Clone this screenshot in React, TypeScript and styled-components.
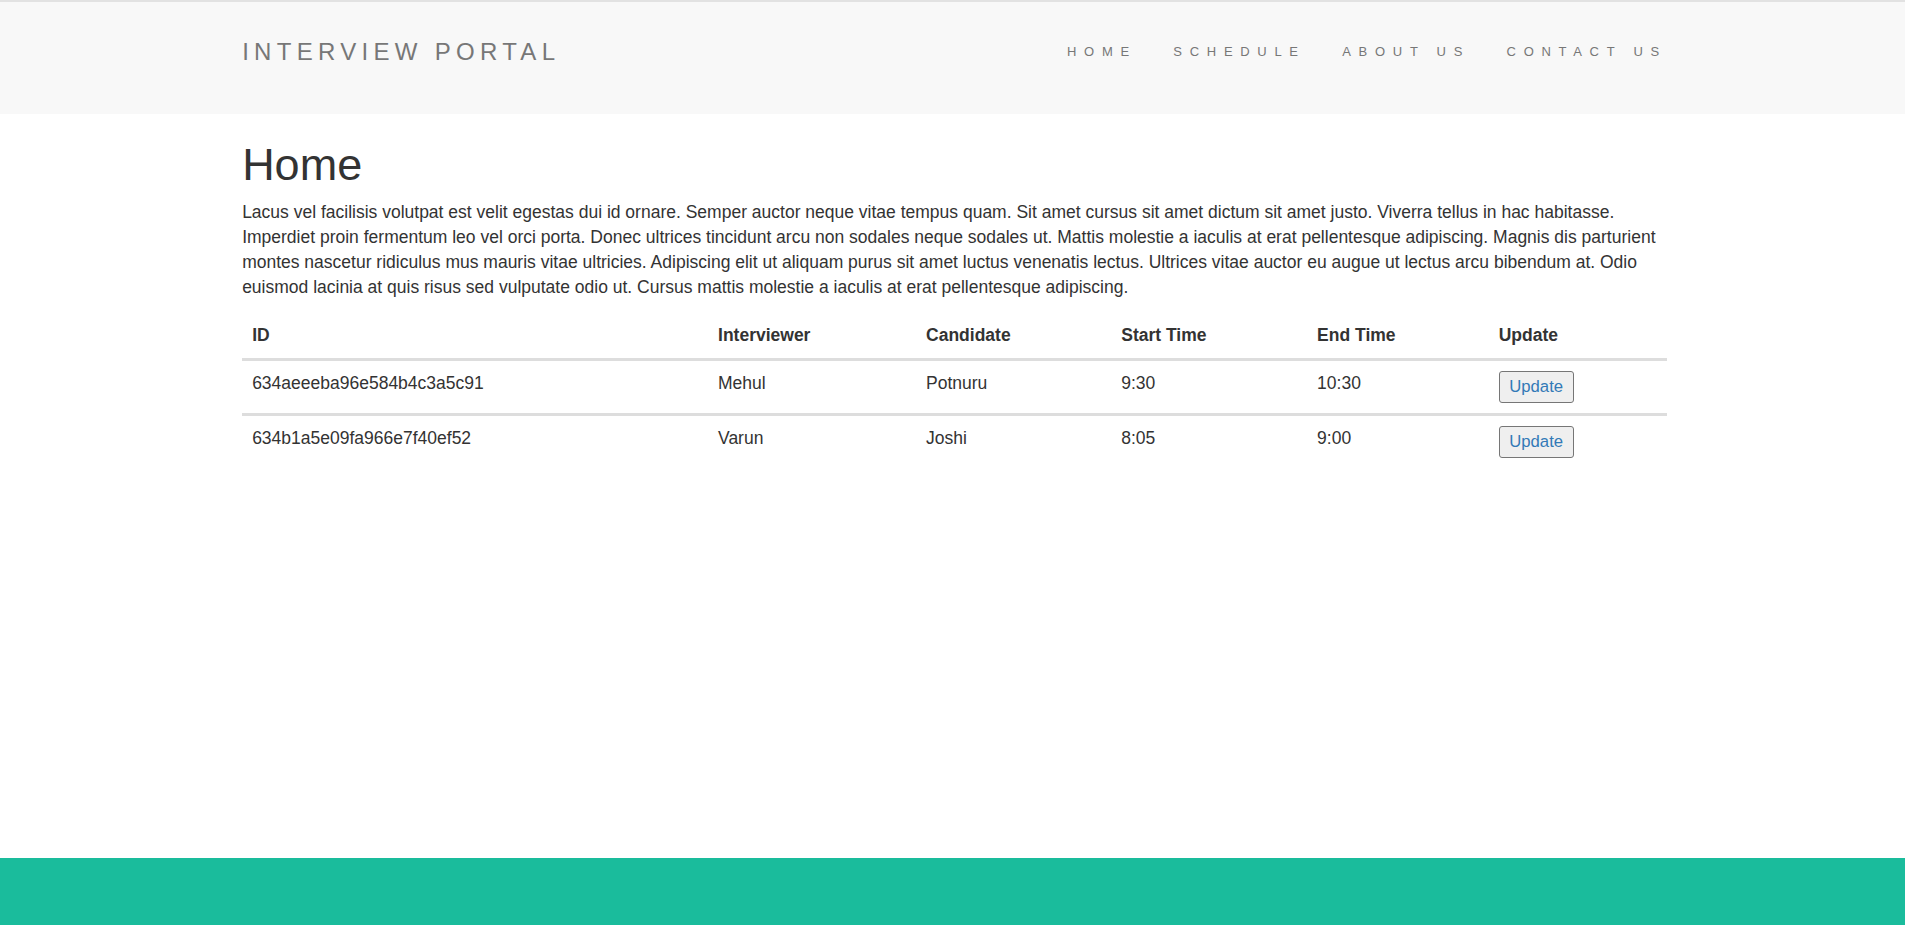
import React from 'react'
import styled, {createGlobalStyle} from 'styled-components'

const GlobalStyle = createGlobalStyle`
  html, body {
    margin: 0;
    padding: 0;
    background: #fff;
  }
  body {
    font-family: "Liberation Sans", Arial, Helvetica, sans-serif;
    font-size: 17.5px;
    line-height: 25px;
    color: #333;
  }
  * {
    box-sizing: border-box;
  }
`

const Page = styled.div`
  min-height: 100vh;
  display: flex;
  flex-direction: column;
`

const Container = styled.div`
  width: 75%;
  margin: 0 auto;
  padding-left: 4px;
`

const Navbar = styled.header`
  background: #f8f8f8;
  border-top: 2px solid #e2e2e2;
  height: 114px;
`

const NavInner = styled(Container)`
  display: flex;
  align-items: center;
  justify-content: space-between;
  padding-top: 35px;
`

const Brand = styled.a`
  font-size: 24px;
  line-height: 30px;
  letter-spacing: 5.3px;
  color: #777;
  text-decoration: none;
`

const NavList = styled.nav`
  display: flex;
  gap: 36.5px;
  margin-right: 0;
`

const NavLink = styled.a`
  font-size: 13px;
  line-height: 30px;
  letter-spacing: 7.7px;
  color: #777;
  text-decoration: none;
`

const Main = styled(Container)`
  flex: 1;
`

const Title = styled.h1`
  font-size: 45px;
  font-weight: 500;
  line-height: 1.1;
  margin: 26px 0 10px;
  color: #333;
`

const Lead = styled.p`
  margin: 0 0 13.5px;
`

const Table = styled.table`
  width: 100%;
  border-collapse: collapse;
  border-spacing: 0;
`

const Th = styled.th<{$w: string}>`
  width: ${p => p.$w};
  text-align: left;
  font-weight: bold;
  padding: 10px;
  vertical-align: bottom;
  border-bottom: 3px solid #ddd;
`

const Td = styled.td`
  padding: 10px;
  vertical-align: top;
  border-top: 3px solid #ddd;
`

const UpdateButton = styled.button`
  font-family: "Liberation Sans", Arial, sans-serif;
  font-size: 16.7px;
  line-height: 26px;
  height: 32px;
  padding: 0 9.5px;
  color: #337ab7;
  background: #efefef;
  border: 1px solid #767676;
  border-radius: 3px;
  cursor: pointer;
`

const Footer = styled.footer`
  height: 67px;
  background: #1abc9c;
`

const columns = [
  {label: 'ID', w: '32.7%'},
  {label: 'Interviewer', w: '14.6%'},
  {label: 'Candidate', w: '13.7%'},
  {label: 'Start Time', w: '13.75%'},
  {label: 'End Time', w: '12.75%'},
  {label: 'Update', w: '12.5%'}
]

const interviews = [
  {id: '634aeeeba96e584b4c3a5c91', interviewer: 'Mehul', candidate: 'Potnuru', start: '9:30', end: '10:30'},
  {id: '634b1a5e09fa966e7f40ef52', interviewer: 'Varun', candidate: 'Joshi', start: '8:05', end: '9:00'}
]

export default function App() {
  return (
    <Page>
      <GlobalStyle />
      <Navbar>
        <NavInner>
          <Brand href="#">INTERVIEW PORTAL</Brand>
          <NavList>
            <NavLink href="#">HOME</NavLink>
            <NavLink href="#">SCHEDULE</NavLink>
            <NavLink href="#">ABOUT US</NavLink>
            <NavLink href="#">CONTACT US</NavLink>
          </NavList>
        </NavInner>
      </Navbar>
      <Main>
        <Title>Home</Title>
        <Lead>
          Lacus vel facilisis volutpat est velit egestas dui id ornare. Semper auctor neque vitae tempus quam. Sit
          amet cursus sit amet dictum sit amet justo. Viverra tellus in hac habitasse. Imperdiet proin fermentum leo
          vel orci porta. Donec ultrices tincidunt arcu non sodales neque sodales ut. Mattis molestie a iaculis at
          erat pellentesque adipiscing. Magnis dis parturient montes nascetur ridiculus mus mauris vitae ultricies.
          Adipiscing elit ut aliquam purus sit amet luctus venenatis lectus. Ultrices vitae auctor eu augue ut lectus
          arcu bibendum at. Odio euismod lacinia at quis risus sed vulputate odio ut. Cursus mattis molestie a
          iaculis at erat pellentesque adipiscing.
        </Lead>
        <Table>
          <thead>
            <tr>
              {columns.map(c => (
                <Th key={c.label} $w={c.w}>
                  {c.label}
                </Th>
              ))}
            </tr>
          </thead>
          <tbody>
            {interviews.map(row => (
              <tr key={row.id}>
                <Td>{row.id}</Td>
                <Td>{row.interviewer}</Td>
                <Td>{row.candidate}</Td>
                <Td>{row.start}</Td>
                <Td>{row.end}</Td>
                <Td>
                  <UpdateButton>Update</UpdateButton>
                </Td>
              </tr>
            ))}
          </tbody>
        </Table>
      </Main>
      <Footer />
    </Page>
  )
}
